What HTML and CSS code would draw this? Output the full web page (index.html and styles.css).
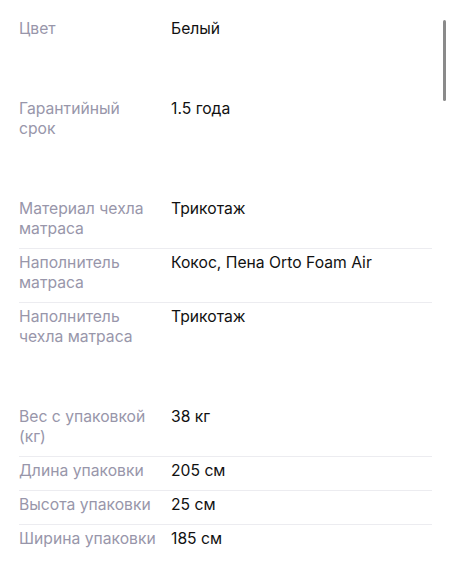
FILE: index.html
```html
<!DOCTYPE html>
<html lang="ru">
<head>
<meta charset="utf-8">
<link rel="stylesheet" href="styles.css">
</head>
<body>
<div class="page">
  <section class="group">
    <div class="row"><div class="label">Цвет</div><div class="value">Белый</div></div>
  </section>
  <section class="group">
    <div class="row"><div class="label">Гарантийный срок</div><div class="value">1.5 года</div></div>
  </section>
  <section class="group">
    <div class="row"><div class="label">Материал чехла матраса</div><div class="value">Трикотаж</div></div>
    <div class="row"><div class="label">Наполнитель матраса</div><div class="value">Кокос, Пена Orto Foam Air</div></div>
    <div class="row"><div class="label">Наполнитель чехла матраса</div><div class="value">Трикотаж</div></div>
  </section>
  <section class="group">
    <div class="row"><div class="label">Вес с упаковкой (кг)</div><div class="value">38 кг</div></div>
    <div class="row"><div class="label">Длина упаковки</div><div class="value">205 см</div></div>
    <div class="row"><div class="label">Высота упаковки</div><div class="value">25 см</div></div>
    <div class="row"><div class="label">Ширина упаковки</div><div class="value">185 см</div></div>
  </section>
</div>
<div class="scrollbar"></div>
</body>
</html>
```
FILE: styles.css
```css
html, body {
  margin: 0;
  padding: 0;
  background: #fff;
}
body {
  width: 450px;
  height: 565px;
  overflow: hidden;
  position: relative;
  font-family: Inter, "Noto Sans", sans-serif;
  font-size: 15.7px;
  line-height: 20px;
}
.page {
  padding: 15px 18px 0 19px;
  width: 413px;
}
.group + .group {
  margin-top: 47px;
}
.row {
  display: grid;
  grid-template-columns: 138px 1fr;
  column-gap: 14px;
  padding: 4px 0 9px;
}
.row + .row {
  border-top: 1px solid #ececf0;
}
.label {
  color: #9896aa;
}
.value {
  color: #111;
}
.scrollbar {
  position: absolute;
  left: 443px;
  top: 20px;
  width: 3px;
  height: 81px;
  border-radius: 2px;
  background: #8a8a8a;
}
```
